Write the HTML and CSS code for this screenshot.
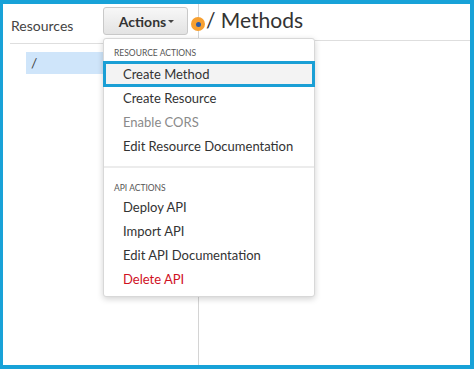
FILE: index.html
```html
<!doctype html>
<html>
<head>
	<meta charset="utf-8">
	<title>API Gateway - Methods</title>
	<link rel="stylesheet" href="styles.css">
</head>

<body>
	<div class="app">
		<div class="sidebar">
			<div class="sidebar-head">
				<span class="title">Resources</span>
				<button class="actions">Actions<span class="caret"></span></button>
			</div>
			<div class="tree">
				<div class="node selected">/</div>
			</div>
		</div>

		<div class="main">
			<div class="main-head">
				<h1>/ Methods</h1>
			</div>
		</div>

		<span class="pulse"><span class="pulse-dot"></span></span>

		<div class="menu">
			<div class="menu-label">Resource Actions</div>
			<div class="menu-item active">Create Method</div>
			<div class="menu-item">Create Resource</div>
			<div class="menu-item disabled">Enable CORS</div>
			<div class="menu-item">Edit Resource Documentation</div>
			<div class="menu-sep"></div>
			<div class="menu-label second">API Actions</div>
			<div class="menu-item">Deploy API</div>
			<div class="menu-item">Import API</div>
			<div class="menu-item">Edit API Documentation</div>
			<div class="menu-item danger">Delete API</div>
		</div>
	</div>
</body>
</html>
```

FILE: styles.css
```css
html,body{
	margin: 0;
	padding: 0;
}
body{
	background: #18a2d8;
	font-family: Lato, "Open Sans", sans-serif;
	color: #333;
}
.app{
	position: relative;
	display: flex;
	margin: 4px 4px 4px 3px;
	height: 361px;
	background: #fff;
}

/* left column */
.sidebar{
	width: 195px;
	border-right: 1px solid #d4d4d4;
}
.sidebar-head{
	display: flex;
	align-items: flex-start;
	height: 39px;
	margin: 0 7px;
	padding-left: 1px;
	border-bottom: 1px solid #dedede;
}
.title{
	width: 92px;
	padding-top: 13px;
	font-size: 14px;
	line-height: 17px;
	color: #444;
}
.actions{
	display: flex;
	align-items: center;
	justify-content: center;
	margin-top: 3px;
	width: 85px;
	height: 28px;
	padding: 0 0 0 2px;
	border: 1px solid #c9c9c9;
	border-radius: 3px;
	background: linear-gradient(#f7f7f7, #e3e3e3);
	font-family: Lato, sans-serif;
	font-size: 14px;
	font-weight: bold;
	color: #333;
}
.caret{
	margin-left: 2px;
	margin-top: 1px;
	border-top: 3px solid #444;
	border-left: 3.5px solid transparent;
	border-right: 3.5px solid transparent;
}
.tree{
	padding-top: 8px;
}
.node{
	margin: 0 8px 0 23px;
	height: 22px;
	padding-left: 5px;
	font-size: 14px;
	line-height: 22px;
	color: #444;
}
.selected{
	background: #cfe5fa;
}

/* right column */
.main{
	flex: 1;
}
.main-head{
	height: 36px;
	padding-left: 7px;
	border-bottom: 1px solid #dedede;
}
h1{
	margin: 0;
	padding-top: 3px;
	font-size: 21px;
	font-weight: normal;
	line-height: 25px;
	color: #333;
}

/* hint marker over the divider */
.pulse{
	position: absolute;
	left: 188px;
	top: 13px;
	width: 14px;
	height: 14px;
	border-radius: 50%;
	background: #f7a031;
	display: flex;
	align-items: center;
	justify-content: center;
}
.pulse-dot{
	width: 5px;
	height: 5px;
	border-radius: 50%;
	background: #2a5aa8;
}

/* dropdown */
.menu{
	position: absolute;
	left: 100px;
	top: 34px;
	width: 210px;
	padding-bottom: 5px;
	background: #fff;
	border: 1px solid #d8d8d8;
	border-radius: 3px;
	box-shadow: 0 2px 6px rgba(0,0,0,0.18);
}
.menu-label{
	padding: 8px 10px 4px;
	font-size: 8.5px;
	line-height: 12px;
	text-transform: uppercase;
	color: #555;
}
.menu-label.second{
	padding-top: 14px;
	padding-bottom: 1px;
}
.menu-item{
	height: 24px;
	padding-left: 19px;
	font-size: 13px;
	line-height: 24px;
	color: #333;
	white-space: nowrap;
}
.menu-item.active{
	margin: -2px -1px -1px -1px;
	height: 20px;
	padding-left: 17px;
	line-height: 20px;
	border: 3px solid #1a9fd5;
	background: #f3f3f3;
}
.menu-item.disabled{
	color: #8a8a8a;
}
.menu-item.danger{
	color: #d0111f;
}
.menu-sep{
	margin-top: 8px;
	border-top: 2px solid #ececec;
}
```
